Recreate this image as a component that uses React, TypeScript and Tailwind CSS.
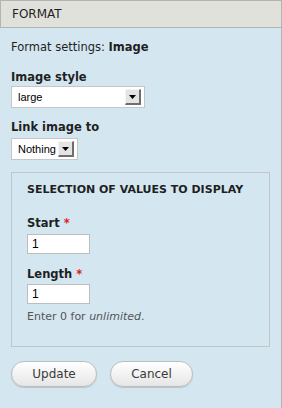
import React from "react";

function FakeSelect({ value, width }: { value: string; width: string }) {
  return (
    <div
      className={`flex h-[22px] items-center justify-between border border-[#c6c6c6] bg-white pl-[6px] pr-[3px] ${width}`}
    >
      <span className="font-['Liberation_Sans',Arial,sans-serif] text-[11px] text-black">
        {value}
      </span>
      <span className="flex h-[16px] w-[16px] items-center justify-center border-r-2 border-b-2 border-t border-l border-r-[#6e6e6e] border-b-[#6e6e6e] border-t-[#f4f4f4] border-l-[#f4f4f4] bg-[#e4e4e4]">
        <svg width="7" height="4" viewBox="0 0 7 4">
          <path d="M0 0h7L3.5 4z" fill="#000" />
        </svg>
      </span>
    </div>
  );
}

function TextInput({ value }: { value: string }) {
  return (
    <div className="flex h-[20px] w-[63px] items-center border border-[#bdbdbd] bg-white px-[4px] font-['Liberation_Sans',Arial,sans-serif] text-[12px] text-black">
      {value}
    </div>
  );
}

export default function App() {
  return (
    <div className="h-[408px] w-[282px] border-r border-[#b4b4b4] bg-[#d4e7f1] font-['DejaVu_Sans',Verdana,sans-serif] text-[#1f1f1f]">
      <div className="flex h-[28px] items-center border-t border-l border-b border-[#b4b4b4] bg-[#e1e1db] pl-[11px] text-[12px]">
        FORMAT
      </div>
      <div className="px-[11px]">
        <p className="mt-[11px] text-[11.5px]">
          Format settings: <span className="font-bold">Image</span>
        </p>
        <div className="mt-[13px]">
          <label className="block text-[11.5px] font-bold leading-[16px]">Image style</label>
          <div className="mt-[1px]">
            <FakeSelect value="large" width="w-[134px]" />
          </div>
        </div>
        <div className="mt-[11px]">
          <label className="block text-[11.5px] font-bold leading-[16px]">Link image to</label>
          <div className="mt-[3px]">
            <FakeSelect value="Nothing" width="w-[67px]" />
          </div>
        </div>
        <fieldset className="mt-[12px] h-[175px] border border-[#c2c6c8] px-[15px] pt-[9px]">
          <h2 className="whitespace-nowrap text-[11px] font-bold leading-[16px]">
            SELECTION OF VALUES TO DISPLAY
          </h2>
          <div className="mt-[17px]">
            <label className="block text-[11.5px] font-bold leading-[16px]">
              Start <span className="text-[#e21a1a]">*</span>
            </label>
            <div className="mt-[3px]">
              <TextInput value="1" />
            </div>
          </div>
          <div className="mt-[12px]">
            <label className="block text-[11.5px] font-bold leading-[16px]">
              Length <span className="text-[#e21a1a]">*</span>
            </label>
            <div className="mt-[2px]">
              <TextInput value="1" />
            </div>
          </div>
          <p className="mt-[5px] text-[11px] text-[#555]">
            Enter 0 for <em>unlimited</em>.
          </p>
        </fieldset>
        <div className="mt-[14px] flex gap-[13px]">
          <button className="h-[26px] w-[86px] rounded-full border border-[#bdbdbd] bg-gradient-to-b from-white to-[#e6e6e6] text-[12px] text-[#3a3a3a] shadow-[0_1px_1px_rgba(0,0,0,0.15)]">
            Update
          </button>
          <button className="h-[26px] w-[83px] rounded-full border border-[#bdbdbd] bg-gradient-to-b from-white to-[#e6e6e6] text-[12px] text-[#3a3a3a] shadow-[0_1px_1px_rgba(0,0,0,0.15)]">
            Cancel
          </button>
        </div>
      </div>
    </div>
  );
}
